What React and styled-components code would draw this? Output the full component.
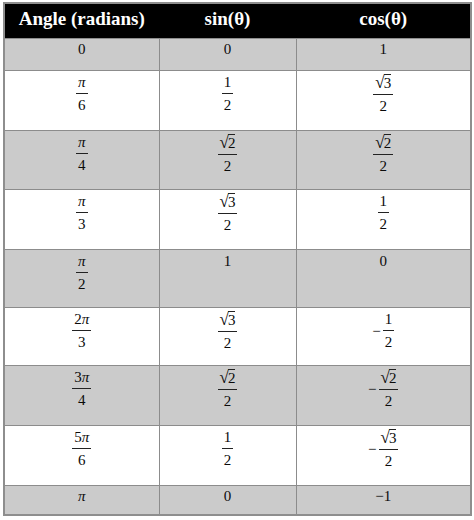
import React from "react";
import styled, { createGlobalStyle } from "styled-components";

const Global = createGlobalStyle`
  html, body { margin: 0; padding: 0; background: #ffffff; }
  body, table, th, td { font-family: "Liberation Serif", "DejaVu Serif", serif; }
`;

const Page = styled.div`
  padding: 2px 0 0 3px;
`;

const Table = styled.table`
  border-collapse: collapse;
  table-layout: fixed;
  width: 467px;
  border: 2px solid #8e8e8e;
  font-family: "Liberation Serif", "DejaVu Serif", serif;
  color: #0a0a0a;
`;

const Row = styled.tr`
  height: ${(p) => p.$h}px;
  background: ${(p) => (p.$shade ? "#cbcbcb" : "#ffffff")};
`;

const HeadRow = styled.tr`
  height: 35px;
  background: #000;
`;

const HeadCell = styled.th`
  font-family: "Liberation Serif", "DejaVu Serif", serif;
  color: #fff;
  font-weight: bold;
  font-size: 19px;
  line-height: 20px;
  text-align: center;
  vertical-align: middle;
  padding: 0 0 4px;
  border: 1px solid #000;
  border-bottom: 1px solid #8e8e8e;
`;

const Cell = styled.td`
  font-family: "Liberation Serif", "DejaVu Serif", serif;
  border: 1px solid #8c8c8c;
  text-align: center;
  vertical-align: top;
  font-size: 15px;
  line-height: 16px;
  padding: ${(p) => (p.$pad != null ? p.$pad : 3)}px 0 0;
`;

const Expr = styled.span`
  display: inline-flex;
  align-items: center;
  gap: 2px;
`;

const Frac = styled.span`
  display: inline-flex;
  flex-direction: column;
  align-items: stretch;
  text-align: center;
`;

const Num = styled.span`
  display: block;
  padding: 0 2px 3px;
  border-bottom: 1px solid #222;
`;

const Den = styled.span`
  display: block;
  padding: 3px 2px 0;
`;

const Pi = styled.i`
  font-style: italic;
`;

const Radical = styled.span`
  display: inline-flex;
  align-items: flex-end;
`;

const RadSign = styled.span`
  font-size: 17px;
  line-height: 17px;
  margin-right: -1px;
`;

const Radicand = styled.span`
  display: inline-block;
  border-top: 1px solid #222;
  line-height: 14px;
  padding: 1px 0 0;
  margin-bottom: 1px;
`;

const Minus = styled.span`
  display: inline-block;
  margin-top: 1px;
`;

const Sqrt = ({ n }) => (
  <Radical>
    <RadSign>√</RadSign>
    <Radicand>{n}</Radicand>
  </Radical>
);

const F = ({ n, d, neg }) => (
  <Expr>
    {neg && <Minus>−</Minus>}
    <Frac>
      <Num>{n}</Num>
      <Den>{d}</Den>
    </Frac>
  </Expr>
);

const pi = <Pi>π</Pi>;

const rows = [
  { h: 32, shade: true, pad: 2, a: "0", s: "0", c: "1" },
  { h: 60, a: <F n={pi} d="6" />, s: <F n="1" d="2" />, c: <F n={<Sqrt n="3" />} d="2" /> },
  { h: 59, shade: true, a: <F n={pi} d="4" />, s: <F n={<Sqrt n="2" />} d="2" />, c: <F n={<Sqrt n="2" />} d="2" /> },
  { h: 60, a: <F n={pi} d="3" />, s: <F n={<Sqrt n="3" />} d="2" />, c: <F n="1" d="2" /> },
  { h: 58, shade: true, a: <F n={pi} d="2" />, s: "1", c: "0" },
  { h: 58, a: <F n={<>2{pi}</>} d="3" />, s: <F n={<Sqrt n="3" />} d="2" />, c: <F neg n="1" d="2" /> },
  { h: 60, shade: true, a: <F n={<>3{pi}</>} d="4" />, s: <F n={<Sqrt n="2" />} d="2" />, c: <F neg n={<Sqrt n="2" />} d="2" /> },
  { h: 60, a: <F n={<>5{pi}</>} d="6" />, s: <F n="1" d="2" />, c: <F neg n={<Sqrt n="3" />} d="2" /> },
  { h: 30, shade: true, pad: 2, a: pi, s: "0", c: "−1" },
];

export default function App() {
  return (
    <>
      <Global />
      <Page>
        <Table>
          <colgroup>
            <col style={{ width: 155 }} />
            <col style={{ width: 137 }} />
            <col style={{ width: 175 }} />
          </colgroup>
          <thead>
            <HeadRow>
              <HeadCell>Angle (radians)</HeadCell>
              <HeadCell>sin(θ)</HeadCell>
              <HeadCell>cos(θ)</HeadCell>
            </HeadRow>
          </thead>
          <tbody>
            {rows.map((r, i) => (
              <Row key={i} $h={r.h} $shade={r.shade}>
                <Cell $pad={r.pad}>{r.a}</Cell>
                <Cell $pad={r.pad}>{r.s}</Cell>
                <Cell $pad={r.pad}>{r.c}</Cell>
              </Row>
            ))}
          </tbody>
        </Table>
      </Page>
    </>
  );
}
